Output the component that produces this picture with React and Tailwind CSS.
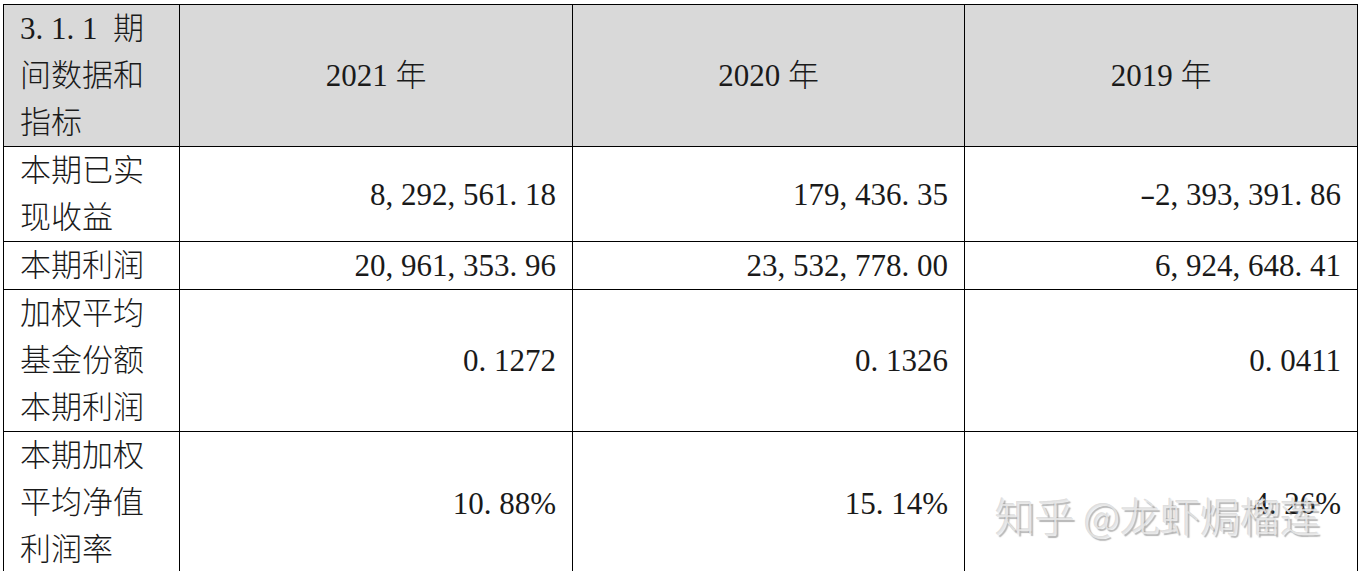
import React from 'react';

const rows = [
  { label: ['本期已实', '现收益'], values: ['8,292,561.18', '179,436.35', '-2,393,391.86'] },
  { label: ['本期利润'], values: ['20,961,353.96', '23,532,778.00', '6,924,648.41'] },
  { label: ['加权平均', '基金份额', '本期利润'], values: ['0.1272', '0.1326', '0.0411'] },
  { label: ['本期加权', '平均净值', '利润率'], values: ['10.88%', '15.14%', '4.26%'] },
];

// SimSun-style half-width punctuation: every ascii mark takes half an em
const Num = ({ text }) => (
  <>
    {text.split('').map((ch, i) => {
      if (ch === ',' || ch === '.') {
        return <span key={i} className="inline-block w-[0.5em] text-left">{ch}</span>;
      }
      if (ch === '-') {
        return <span key={i} className="inline-block w-[0.5em] text-center scale-x-150">{ch}</span>;
      }
      if (ch === ' ') {
        return <span key={i} className="inline-block w-[0.5em]">&nbsp;</span>;
      }
      return <span key={i}>{ch}</span>;
    })}
  </>
);

const Watermark = () => (
  <div className="pointer-events-none absolute left-[30px] top-[63px] whitespace-nowrap text-[40px] leading-none text-[#e6e6e6]/90 [font-family:'Noto_Sans_CJK_SC',sans-serif] [text-shadow:2px_2px_1px_rgba(120,120,120,0.55),-1px_-1px_0_rgba(170,170,170,0.4)]">
    知乎 @龙虾焗榴莲
  </div>
);

export default function App() {
  return (
    <div className="min-h-[571px] w-[1359px] overflow-hidden bg-white pl-[3px] pt-[4px] text-[#1a1a1a] [font-family:'Liberation_Serif','Noto_Sans_CJK_SC',serif]">
      <table className="table-fixed border-collapse text-[31px] leading-[47px]">
        <colgroup>
          <col className="w-[176px]" />
          <col className="w-[393px]" />
          <col className="w-[392px]" />
          <col className="w-[393px]" />
        </colgroup>
        <thead>
          <tr className="bg-[#d9d9d9]">
            <th className="border-[1.5px] border-black px-[16px] text-left align-top font-light">
              <div><Num text="3.1.1 " />期</div>
              <div>间数据和</div>
              <div>指标</div>
            </th>
            {['2021', '2020', '2019'].map((y) => (
              <th key={y} className="border-[1.5px] border-black text-center align-middle font-light">
                {y} 年
              </th>
            ))}
          </tr>
        </thead>
        <tbody>
          {rows.map((row, r) => (
            <tr key={r}>
              <td className="border-[1.5px] border-black px-[16px] align-top font-light">
                {row.label.map((l) => (
                  <div key={l}>{l}</div>
                ))}
              </td>
              {row.values.map((v, c) => (
                <td
                  key={c}
                  className={
                    'relative border-[1.5px] border-black pr-[16px] text-right align-middle font-light' +
                    (r === rows.length - 1 ? ' h-[144px]' : '')
                  }
                >
                  <Num text={v} />
                  {r === rows.length - 1 && c === 2 && <Watermark />}
                </td>
              ))}
            </tr>
          ))}
        </tbody>
      </table>
    </div>
  );
}
